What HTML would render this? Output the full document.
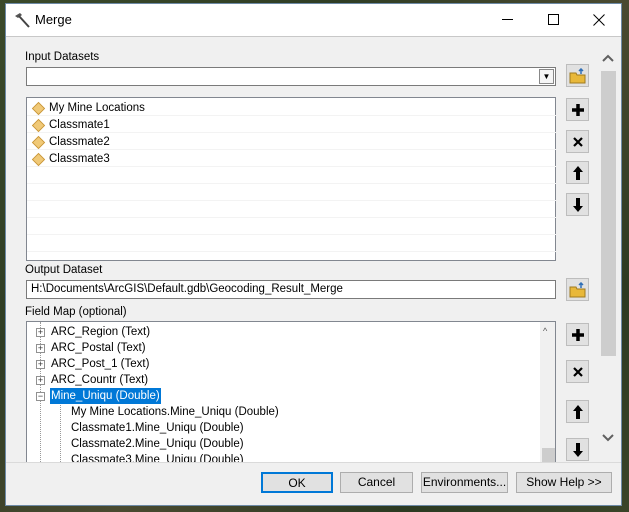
<!DOCTYPE html><html><head><style>
*{box-sizing:border-box;margin:0;padding:0}
body{width:629px;height:512px;overflow:hidden;position:relative;font-family:"Liberation Sans",sans-serif;font-size:11px;color:#000;
background:linear-gradient(135deg,#3b4a2a 0%,#2f3d24 30%,#4a4a30 55%,#2c3a22 80%,#3a4428 100%)}
.a{position:absolute}
.win{left:5px;top:3px;width:617px;height:503px;background:#f0f0f0;border:1px solid #6d8aa6}
.title{left:0;top:0;width:615px;height:33px;background:#fff;border-bottom:1px solid #c8c8c8}
.ib{width:23px;height:23px;background:#e1e1e1;border:1px solid #bdbdbd;display:flex;align-items:center;justify-content:center}
.box{background:#fff;border:1px solid #828790}
.row{position:absolute;left:0;height:17px;width:529px;border-bottom:1px solid #f3f3f3;line-height:19px;padding-left:22px;font-size:11.5px}
.dia{position:absolute;left:6px;top:4px;width:11px;height:11px;background:#f0c977;border:1px solid #c9963a;transform:rotate(45deg) scale(.85)}
.tr{position:absolute;height:16px;line-height:16px;font-size:11.5px}
.pl{position:absolute;width:9px;height:9px;border:1px solid #919191;background:#fff;font-size:9px;line-height:7px;text-align:center;color:#333}
.bb{position:absolute;height:21px;text-align:center;line-height:19px;font-size:12px;background:#e1e1e1;border:1px solid #adadad}
</style></head><body>
<div class="a win">
 <div class="a title">
  <svg class="a" style="left:7px;top:8px" width="18" height="18" viewBox="0 0 18 18"><path d="M2 4 L7 1 L9 3 L5 6 Z" fill="#555"/><path d="M6 4 L16 15" stroke="#444" stroke-width="2"/></svg>
  <div class="a" style="left:29px;top:8px;font-size:13px">Merge</div>
  <div class="a" style="left:496px;top:15px;width:11px;height:1px;background:#000"></div>
  <div class="a" style="left:542px;top:10px;width:11px;height:11px;border:1px solid #000"></div>
  <svg class="a" style="left:587px;top:10px" width="12" height="12"><path d="M0.5 0.5L11.5 11.5M11.5 0.5L0.5 11.5" stroke="#000" stroke-width="1"/></svg>
 </div>
</div>
<div class="a" style="left:25px;top:51px;font-size:11.5px">Input Datasets</div>
<div class="a box" style="left:26px;top:67px;width:530px;height:19px;border-color:#7a7a7a"><div class="a" style="right:1px;top:1px;width:15px;height:15px;border:1px solid #888;background:#f5f5f5;font-size:8px;text-align:center;line-height:14px">▼</div></div>
<div class="a ib" style="left:566px;top:64px"><svg width="18" height="16"><path d="M1 5h6l1 2h8v8H1z" fill="#e8b83a" stroke="#a07a20"/><path d="M12 1v5M10 3l2-2 2 2" stroke="#2f6fb7" fill="none" stroke-width="1.5"/></svg></div>
<div class="a box" style="left:26px;top:97px;width:530px;height:164px">
 <div class="row" style="top:1px"><div class="dia"></div>My Mine Locations</div>
 <div class="row" style="top:18px"><div class="dia"></div>Classmate1</div>
 <div class="row" style="top:35px"><div class="dia"></div>Classmate2</div>
 <div class="row" style="top:52px"><div class="dia"></div>Classmate3</div>
 <div class="row" style="top:69px"></div><div class="row" style="top:86px"></div><div class="row" style="top:103px"></div><div class="row" style="top:120px"></div><div class="row" style="top:137px"></div>
</div>
<div class="a ib" style="left:566px;top:98px"><svg width="14" height="14"><path d="M7 1v12M1 7h12" stroke="#000" stroke-width="3.5"/></svg></div>
<div class="a ib" style="left:566px;top:130px"><svg width="12" height="12"><path d="M2 2L10 10M10 2L2 10" stroke="#000" stroke-width="2.2"/></svg></div>
<div class="a ib" style="left:566px;top:161px"><svg width="12" height="16"><path d="M6 1L11 7H8V15H4V7H1Z" fill="#000"/></svg></div>
<div class="a ib" style="left:566px;top:193px"><svg width="12" height="16"><path d="M6 15L11 9H8V1H4V9H1Z" fill="#000"/></svg></div>
<div class="a" style="left:25px;top:264px;font-size:11.5px">Output Dataset</div>
<div class="a box" style="left:26px;top:280px;width:530px;height:19px;border-color:#7a7a7a;padding-left:4px;line-height:17px;font-size:11.5px">H:\Documents\ArcGIS\Default.gdb\Geocoding_Result_Merge</div>
<div class="a ib" style="left:566px;top:278px"><svg width="18" height="16"><path d="M1 5h6l1 2h8v8H1z" fill="#e8b83a" stroke="#a07a20"/><path d="M12 1v5M10 3l2-2 2 2" stroke="#2f6fb7" fill="none" stroke-width="1.5"/></svg></div>
<div class="a" style="left:25px;top:306px;font-size:11.5px">Field Map (optional)</div>
<div class="a box" style="left:26px;top:321px;width:530px;height:141px;overflow:hidden;border-bottom:none">
 <div class="a" style="left:13px;top:0;height:140px;border-left:1px dotted #999"></div>
 <div class="a" style="left:33px;top:80px;height:60px;border-left:1px dotted #999"></div>
 <div class="pl" style="left:9px;top:6px">+</div><div class="tr" style="left:24px;top:2px">ARC_Region (Text)</div>
 <div class="pl" style="left:9px;top:22px">+</div><div class="tr" style="left:24px;top:18px">ARC_Postal (Text)</div>
 <div class="pl" style="left:9px;top:38px">+</div><div class="tr" style="left:24px;top:34px">ARC_Post_1 (Text)</div>
 <div class="pl" style="left:9px;top:54px">+</div><div class="tr" style="left:24px;top:50px">ARC_Countr (Text)</div>
 <div class="pl" style="left:9px;top:70px">−</div><div class="tr" style="left:23px;top:66px;background:#0078d7;color:#fff;padding:0 1px">Mine_Uniqu (Double)</div>
 <div class="tr" style="left:44px;top:82px">My Mine Locations.Mine_Uniqu (Double)</div>
 <div class="tr" style="left:44px;top:98px">Classmate1.Mine_Uniqu (Double)</div>
 <div class="tr" style="left:44px;top:114px">Classmate2.Mine_Uniqu (Double)</div>
 <div class="tr" style="left:44px;top:130px">Classmate3.Mine_Uniqu (Double)</div>
 <div class="a" style="left:513px;top:0;width:16px;height:141px;background:#f0f0f0"><div class="a" style="left:3px;top:4px;font-size:9px;color:#555">^</div><div class="a" style="left:2px;top:126px;width:13px;height:15px;background:#cdcdcd"></div></div>
</div>
<div class="a ib" style="left:566px;top:323px"><svg width="14" height="14"><path d="M7 1v12M1 7h12" stroke="#000" stroke-width="3.5"/></svg></div>
<div class="a ib" style="left:566px;top:360px"><svg width="12" height="12"><path d="M2 2L10 10M10 2L2 10" stroke="#000" stroke-width="2.2"/></svg></div>
<div class="a ib" style="left:566px;top:400px"><svg width="12" height="16"><path d="M6 1L11 7H8V15H4V7H1Z" fill="#000"/></svg></div>
<div class="a ib" style="left:566px;top:438px"><svg width="12" height="16"><path d="M6 15L11 9H8V1H4V9H1Z" fill="#000"/></svg></div>
<div class="a" style="left:6px;top:462px;width:615px;height:1px;background:#dadada"></div>
<svg class="a" style="left:602px;top:54px" width="12" height="8"><path d="M1 7L6 2L11 7" stroke="#606060" stroke-width="2" fill="none"/></svg>
<div class="a" style="left:601px;top:71px;width:15px;height:285px;background:#cdcdcd"></div>
<svg class="a" style="left:602px;top:434px" width="12" height="8"><path d="M1 1L6 6L11 1" stroke="#606060" stroke-width="2" fill="none"/></svg>
<div class="bb" style="left:261px;top:472px;width:72px;border:2px solid #0078d7">OK</div>
<div class="bb" style="left:340px;top:472px;width:73px">Cancel</div>
<div class="bb" style="left:421px;top:472px;width:87px">Environments...</div>
<div class="bb" style="left:516px;top:472px;width:96px">Show Help &gt;&gt;</div>
</body></html>
